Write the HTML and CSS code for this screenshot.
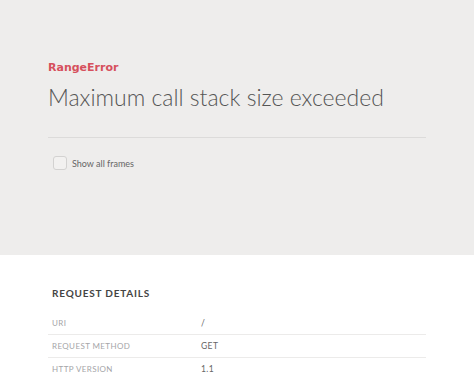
FILE: index.html
```html
<!DOCTYPE html>
<html lang="en">
  <head>
    <meta charset="UTF-8" />
    <title>RangeError</title>
    <link rel="stylesheet" href="styles.css">
  </head>
  <body>
    <section class="error-header">
      <div class="error-name">RangeError</div>
      <h1 class="error-message">Maximum call stack size exceeded</h1>
      <div class="frames-toggle">
        <label>
          <span class="checkbox"></span>
          Show all frames
        </label>
      </div>
    </section>

    <section class="request">
      <h2>Request Details</h2>
      <table class="details">
        <tr>
          <td class="key">URI</td>
          <td class="value">/</td>
        </tr>
        <tr>
          <td class="key">Request Method</td>
          <td class="value">GET</td>
        </tr>
        <tr>
          <td class="key">HTTP Version</td>
          <td class="value">1.1</td>
        </tr>
      </table>
    </section>
  </body>
</html>
```

FILE: styles.css
```css
body {
  margin: 0;
  font-family: Lato, "Open Sans", sans-serif;
  background: #ffffff;
  color: #555;
}

.error-header {
  background: #eeedec;
  height: 255px;
  padding: 0 48px;
  box-sizing: border-box;
  overflow: hidden;
}

.error-name {
  padding-top: 61px;
  font-family: "DejaVu Sans", sans-serif;
  font-weight: bold;
  font-size: 11px;
  color: #d6505d;
}

.error-message {
  margin: 9px 0 0;
  padding-bottom: 26px;
  font-weight: 300;
  font-size: 23px;
  color: #555;
  border-bottom: 1px solid #dcdbda;
}

.frames-toggle {
  padding: 18px 0 0 5px;
  font-size: 9px;
  color: #666;
}

.frames-toggle label {
  display: flex;
  align-items: center;
  gap: 5px;
}

.checkbox {
  width: 12px;
  height: 12px;
  border: 1px solid #d3d2d1;
  border-radius: 3px;
  background: #f2f1f0;
}

.request {
  padding: 32px 48px 0;
}

.request h2 {
  margin: 0 0 13px 4px;
  font-size: 10px;
  font-weight: bold;
  letter-spacing: 0.8px;
  text-transform: uppercase;
  color: #444;
}

.details {
  width: 100%;
  border-collapse: collapse;
  font-size: 8px;
  letter-spacing: 0.4px;
}

.details td {
  padding: 0 4px;
  height: 22px;
  border-bottom: 1px solid #ecebea;
}

.details tr:last-child td {
  border-bottom: none;
}

.key {
  width: 141px;
  text-transform: uppercase;
  color: #a5a5a8;
}

.value {
  font-size: 8.5px;
  color: #666;
}
```
